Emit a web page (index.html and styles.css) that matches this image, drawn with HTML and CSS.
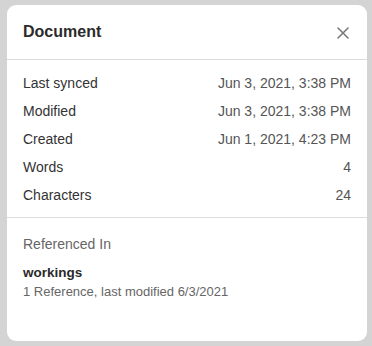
FILE: index.html
```html
<!DOCTYPE html>
<html>
<head>
<meta charset="utf-8">
<link rel="stylesheet" href="styles.css">
</head>
<body>
<div class="card">
  <div class="header">
    <div class="title">Document</div>
    <svg class="close" width="12" height="12" viewBox="0 0 12 12"><path d="M1 1L11 11M11 1L1 11" stroke="#7a7a7a" stroke-width="1.6" stroke-linecap="round" fill="none"/></svg>
  </div>
  <div class="rows">
    <div class="row"><span class="label">Last synced</span><span class="value">Jun 3, 2021, 3:38 PM</span></div>
    <div class="row"><span class="label">Modified</span><span class="value">Jun 3, 2021, 3:38 PM</span></div>
    <div class="row"><span class="label">Created</span><span class="value">Jun 1, 2021, 4:23 PM</span></div>
    <div class="row"><span class="label">Words</span><span class="value">4</span></div>
    <div class="row"><span class="label">Characters</span><span class="value">24</span></div>
  </div>
  <div class="refs">
    <div class="refs-title">Referenced In</div>
    <div class="ref-name">workings</div>
    <div class="ref-meta">1 Reference, last modified 6/3/2021</div>
  </div>
</div>
</body>
</html>
```
FILE: styles.css
```css
html, body {
  margin: 0;
  padding: 0;
}
body {
  background: #d4d4d4;
  width: 372px;
  height: 346px;
  font-family: "Liberation Sans", Arial, Helvetica, sans-serif;
  color: #333;
  padding: 5px 0 0 7px;
  box-sizing: border-box;
}
.card {
  width: 360px;
  height: 336px;
  background: #fff;
  border-radius: 9px;
  box-sizing: border-box;
}
.header {
  height: 55px;
  border-bottom: 1px solid #dcdcdc;
  box-sizing: border-box;
  display: flex;
  align-items: center;
  justify-content: space-between;
  padding: 0 18px 0 16px;
}
.title {
  font-size: 16px;
  font-weight: bold;
  color: #2b2b2b;
  margin-top: -1px;
}
.close {
  display: block;
  margin-top: 2px;
}
.rows {
  padding: 9px 16px 8px 16px;
  border-bottom: 1px solid #dcdcdc;
}
.row {
  height: 28px;
  display: flex;
  align-items: center;
  justify-content: space-between;
  font-size: 14px;
}
.label {
  color: #333;
}
.value {
  color: #555;
}
.refs {
  padding: 17px 16px 0 16px;
}
.refs-title {
  font-size: 14px;
  color: #666;
  line-height: 18px;
}
.ref-name {
  font-size: 13.5px;
  font-weight: 600;
  color: #2a2a2a;
  margin-top: 11px;
  line-height: 18px;
}
.ref-meta {
  font-size: 13px;
  color: #666;
  line-height: 16px;
  margin-top: 2px;
}
```
